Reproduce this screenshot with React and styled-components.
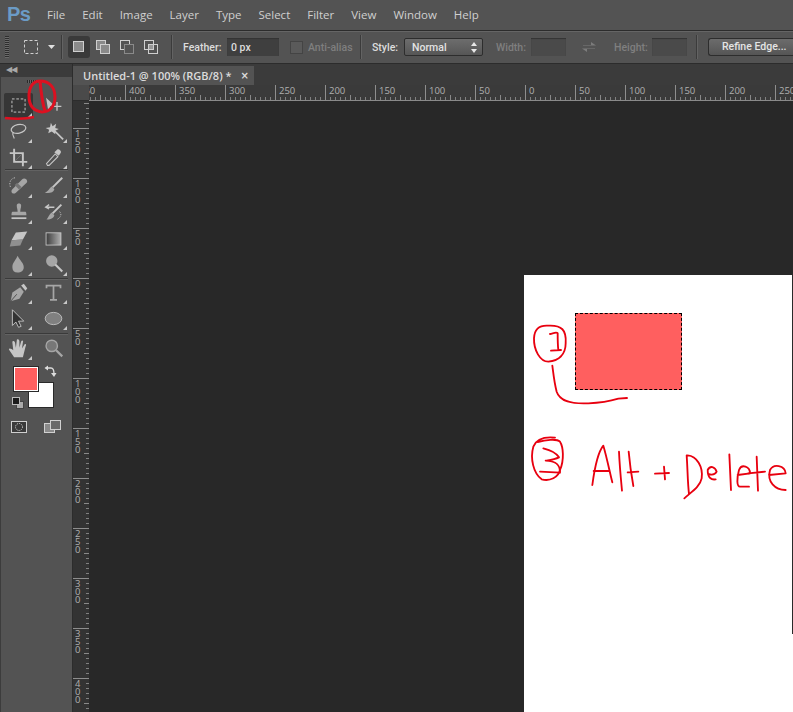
import styled, { createGlobalStyle } from "styled-components";

const GlobalStyle = createGlobalStyle`
  html, body {
    margin: 0;
    padding: 0;
    background: #fff;
  }
  * {
    box-sizing: border-box;
  }
`;

const Window = styled.div`
  width: 793px;
  height: 712px;
  overflow: hidden;
  display: flex;
  flex-direction: column;
  background: #535353;
  font-family: "Open Sans", "Liberation Sans", sans-serif;
  color: #d8d8d8;
`;

// 상단 메뉴
const MenuBar = styled.div`
  height: 31px;
  flex: none;
  display: flex;
  align-items: center;
  padding: 0 0 2px 7px;
  background: #535353;
  border-bottom: 1px solid #2c2c2c;
`;

const Logo = styled.span`
  width: 40px;
  font-family: "Liberation Sans", sans-serif;
  font-size: 20px;
  font-weight: 700;
  color: #6b9bc6;
  letter-spacing: -0.5px;
`;

const MenuItems = styled.div`
  display: flex;
  gap: 17px;
`;

const MenuItem = styled.span`
  font-size: 11.5px;
  color: #d0d0d0;
`;

// 옵션 바
const OptionsBar = styled.div`
  height: 33px;
  flex: none;
  display: flex;
  align-items: center;
  padding-bottom: 1px;
  background: #535353;
  border-bottom: 1px solid #2c2c2c;
  border-top: 1px solid #656565;
  font-family: Roboto, "Liberation Sans", sans-serif;
`;

const Grip = styled.div`
  width: 4px;
  height: 22px;
  flex: none;
  margin-left: 5px;
  background: repeating-linear-gradient(to bottom, #2e2e2e 0 1px, #6a6a6a 1px 2px);
`;

const MarqueeOption = styled.svg`
  flex: none;
  margin-left: 6px;
`;

const Separator = styled.div`
  width: 1px;
  height: 24px;
  flex: none;
  margin-left: ${(p) => p.$left}px;
  margin-right: ${(p) => p.$right}px;
  background: #3b3b3b;
  box-shadow: 1px 0 0 #636363;
`;

const ModeButton = styled.div`
  width: 22px;
  height: 22px;
  flex: none;
  margin-right: 2px;
  display: flex;
  align-items: center;
  justify-content: center;
  border-radius: 3px;
  background: ${(p) => (p.$active ? "#3a3a3a" : "transparent")};
`;

const OptionLabel = styled.span`
  flex: none;
  width: ${(p) => p.$width}px;
  font-size: 10.5px;
  font-weight: 500;
  margin-left: ${(p) => p.$left || 0}px;
  color: ${(p) => (p.$muted ? "#7f7f7f" : "#dcdcdc")};
  white-space: nowrap;
`;

const OptionInput = styled.div`
  width: ${(p) => p.$width}px;
  height: 18px;
  flex: none;
  margin-left: ${(p) => p.$left}px;
  padding-left: 4px;
  font-size: 10.5px;
  font-weight: 500;
  line-height: 19px;
  color: #dcdcdc;
  background: ${(p) => (p.$muted ? "#4a4a4a" : "#3f3f3f")};
  box-shadow: inset 0 1px 1px #333;
`;

const CheckBox = styled.div`
  width: 13px;
  height: 13px;
  flex: none;
  margin-left: 11px;
  background: #5a5a5a;
  border: 1px solid #444;
`;

const StyleSelect = styled.div`
  width: 79px;
  height: 18px;
  flex: none;
  margin-left: 8px;
  padding: 0 5px 0 7px;
  display: flex;
  align-items: center;
  justify-content: space-between;
  font-size: 10.5px;
  font-weight: 500;
  color: #e2e2e2;
  border: 1px solid #2d2d2d;
  border-radius: 2px;
  background: linear-gradient(#6d6d6d, #565656);
`;

const SwapIcon = styled.svg`
  flex: none;
  margin: 0 17px 0 15px;
`;

const RefineButton = styled.div`
  width: 85px;
  height: 18px;
  flex: none;
  padding-left: 13px;
  font-size: 10.5px;
  font-weight: 500;
  line-height: 16px;
  color: #e4e4e4;
  white-space: nowrap;
  border: 1px solid #2d2d2d;
  border-right: none;
  border-radius: 3px 0 0 3px;
  background: linear-gradient(#6c6c6c, #555);
`;

const Workspace = styled.div`
  flex: 1;
  min-height: 0;
  display: flex;
`;

// 왼쪽 도구 패널
const ToolPanel = styled.div`
  position: relative;
  width: 73px;
  flex: none;
  display: flex;
  flex-direction: column;
  background: #535353;
  border-left: 1px solid #3c3c3c;
  border-right: 1px solid #2c2c2c;
`;

const PanelHeader = styled.div`
  height: 13px;
  flex: none;
  padding-left: 6px;
  margin-left: -1px;
  font-family: "DejaVu Sans", sans-serif;
  font-size: 8px;
  line-height: 12px;
  letter-spacing: -1px;
  color: #a8a8a8;
  background: #3b3b3b;
`;

const PanelGrip = styled.div`
  width: 16px;
  height: 3px;
  flex: none;
  margin: 3px 0 0 26px;
  background: repeating-linear-gradient(to right, #2a2a2a 0 1px, #666 1px 2px);
`;

const ToolGrid = styled.div`
  display: grid;
  grid-template-columns: 35px 35px;
  grid-auto-rows: 26px;
  flex: none;
  margin-top: ${(p) => p.$top || 0}px;
`;

const ToolCell = styled.div`
  position: relative;
  width: 29px;
  height: 25px;
  margin-left: 3px;
  display: flex;
  align-items: center;
  justify-content: center;
  border-radius: 2px;
  background: ${(p) => (p.$active ? "#363636" : "transparent")};
  svg {
    filter: blur(0.25px);
  }
  ${(p) =>
    p.$more &&
    `
    &::after {
      content: "";
      position: absolute;
      right: 1px;
      bottom: 1px;
      border-left: 4px solid transparent;
      border-bottom: 4px solid #c8c8c8;
    }
  `}
`;

const ToolDivider = styled.div`
  height: 1px;
  flex: none;
  margin: ${(p) => p.$margin};
  background: #3a3a3a;
  box-shadow: 0 1px 0 #626262;
`;

const ColorWell = styled.div`
  position: relative;
  height: 46px;
  flex: none;
  margin-top: 4px;
`;

const Swatch = styled.div`
  position: absolute;
  left: ${(p) => p.$x}px;
  top: ${(p) => p.$y}px;
  width: 24px;
  height: 24px;
  background: ${(p) => p.$color};
  border: 1px solid #fff;
  outline: 1px solid #2a2a2a;
`;

const SwatchIcon = styled.div`
  position: absolute;
  left: ${(p) => p.$x}px;
  top: ${(p) => p.$y}px;
  line-height: 0;
`;

const ModeRow = styled.div`
  display: flex;
  align-items: center;
  flex: none;
  margin-top: 7px;
  padding-left: 9px;
  gap: 15px;
`;

const ToolMarks = styled.svg`
  position: absolute;
  left: -1px;
  top: 0;
  pointer-events: none;
`;

// 문서 영역
const DocumentArea = styled.div`
  flex: 1;
  min-width: 0;
  display: flex;
  flex-direction: column;
  background: #282828;
`;

const TabStrip = styled.div`
  height: 21px;
  flex: none;
  display: flex;
  align-items: flex-end;
  background: #3b3b3b;
`;

const Tab = styled.div`
  width: 181px;
  height: 19px;
  padding-left: 10px;
  display: flex;
  align-items: center;
  font-size: 11px;
  font-weight: 600;
  color: #dcdcdc;
  white-space: nowrap;
  background: #535353;
`;

const TabClose = styled.span`
  margin-left: 9px;
  font-family: "DejaVu Sans", sans-serif;
  font-size: 10px;
`;

const RulerRow = styled.div`
  height: 16px;
  flex: none;
  display: flex;
`;

const RulerCorner = styled.div`
  width: 16px;
  flex: none;
  background: #4a4a4a;
  border-bottom: 1px solid #2c2c2c;
`;

const HorizontalRuler = styled.div`
  flex: 1;
  min-width: 0;
  overflow: hidden;
  display: flex;
  background: #3a3a3a;
  border-bottom: 1px solid #8a8a8a;
`;

const HorizontalTick = styled.div`
  width: 50px;
  height: 15px;
  flex: none;
  margin-left: ${(p) => p.$offset || 0}px;
  padding-left: 3px;
  font-size: 9.5px;
  line-height: 11px;
  color: #b0b0b0;
  border-left: 1px solid #8e8e8e;
  background:
    repeating-linear-gradient(to right, transparent 0 24px, #8a8a8a 24px 25px) left bottom / 100% 5px no-repeat,
    repeating-linear-gradient(to right, transparent 0 4px, #808080 4px 5px) left bottom / 100% 3px no-repeat;
`;

const CanvasRow = styled.div`
  flex: 1;
  min-height: 0;
  display: flex;
`;

const VerticalRuler = styled.div`
  width: 16px;
  flex: none;
  overflow: hidden;
  display: flex;
  flex-direction: column;
  background: #333;
`;

const VerticalTick = styled.div`
  width: 16px;
  height: 50px;
  flex: none;
  margin-top: ${(p) => p.$offset || 0}px;
  padding: 1px 0 0 2px;
  border-top: 1px solid #8e8e8e;
  background:
    repeating-linear-gradient(to bottom, transparent 0 24px, #8a8a8a 24px 25px) right top / 5px 100% no-repeat,
    repeating-linear-gradient(to bottom, transparent 0 4px, #808080 4px 5px) right top / 3px 100% no-repeat;
`;

// 숫자를 한 글자씩 세로로 줄바꿈
const TickLabel = styled.div`
  width: 6px;
  font-size: 9.5px;
  line-height: 8px;
  color: #b0b0b0;
  word-break: break-all;
`;

const Canvas = styled.div`
  flex: 1;
  min-width: 0;
  padding: 174px 0 0 435px;
  background: #282828;
`;

const Page = styled.div`
  position: relative;
  width: 269px;
  height: 437px;
  background: #fff;
`;

const PageEdge = styled.div`
  position: absolute;
  right: 0;
  top: 0;
  width: 1px;
  height: 359px;
  background: #2a2a2a;
`;

const Selection = styled.div`
  position: absolute;
  left: 51px;
  top: 38px;
  width: 107px;
  height: 77px;
  background: #ff5f5f;
  border: 1px dashed #000;
`;

const Scribble = styled.svg`
  position: absolute;
  left: -9px;
  top: -5px;
  overflow: visible;
`;

const menus = ["File", "Edit", "Image", "Layer", "Type", "Select", "Filter", "View", "Window", "Help"];
const rulerX = [450, 400, 350, 300, 250, 200, 150, 100, 50, 0, 50, 100, 150, 200, 250];
const rulerY = ["", 150, 100, 50, 0, 50, 100, 150, 200, 250, 300, 350, 400];

const G = "#a6a6a6";
const L = "#c6c6c6";
const D = "#747474";

const toolIcons = {
  marquee: <rect x="4.5" y="4.5" width="15" height="15" stroke="#d6d6d6" strokeDasharray="3 2" />,
  move: (
    <>
      <path d="M3.5 3 L13 12 L8.5 12.5 L6 18 Z" fill="#c0c0c0" />
      <path d="M11 13 H21 M16 8 V18" stroke={L} strokeWidth="1.5" />
    </>
  ),
  lasso: (
    <>
      <ellipse cx="12" cy="9" rx="8.5" ry="5" stroke={L} strokeWidth="1.4" transform="rotate(-12 12 9)" />
      <path d="M6 13 C4 16 7 17 7 20" stroke={L} strokeWidth="1.3" />
    </>
  ),
  wand: (
    <>
      <path d="M12 10 L23 21" stroke={L} strokeWidth="2" />
      <path d="M9 2 L11 6 L15 3 L14 8 L18 9 L14 11 L14 15 L10 12 L6 14 L7 10 L3 8 L8 7 Z" fill={L} />
    </>
  ),
  crop: (
    <>
      <path d="M7 2 V17 H22 M2 7 H17 V22" stroke={L} strokeWidth="2.2" />
      <path d="M8 16 L16 8" stroke={D} />
    </>
  ),
  dropper: (
    <>
      <path d="M5 21 L4 19 L14 8 L17 11 L7 21 Z" stroke={L} strokeWidth="1.2" />
      <path d="M13 6 L16 3 C18 1 22 5 20 7 L18 10 Z" fill={L} />
    </>
  ),
  heal: (
    <>
      <path d="M8 19 L20 8 C23 5 18 1 15 4 L4 15 C1 18 5 22 8 19 Z" fill={G} transform="translate(1 0)" />
      <path d="M9 9 L14 14" stroke={D} strokeWidth="4" />
      <path d="M8 2 C2 3 1 9 3 13" stroke={L} strokeDasharray="1.5 1.5" />
    </>
  ),
  brush: (
    <>
      <path d="M22 2 L11 13" stroke={L} strokeWidth="2.2" />
      <path d="M10 12 L13 15 C12 19 7 20 2 19 C6 18 7 14 10 12 Z" fill={G} />
    </>
  ),
  stamp: (
    <>
      <path d="M10 4 C10 1 15 1 15 4 C15 7 14 8 14 11 H20 C21 11 21 14 21 15 H4 C4 14 4 11 5 11 H11 C11 8 10 7 10 4 Z" fill={G} />
      <path d="M4 18.5 H21" stroke={L} strokeWidth="2" />
    </>
  ),
  history: (
    <>
      <path d="M21 3 L11 13" stroke={L} strokeWidth="2.2" />
      <path d="M10 12 L13 15 C12 19 7 20 4 20 C6 18 7 14 10 12 Z" fill={G} />
      <path d="M13 6 L4 6 M7 3 L3 6 L7 8" stroke={L} strokeWidth="1.5" />
      <path d="M19 11 C22 14 20 18 16 20" stroke={L} strokeDasharray="1.5 1.5" />
    </>
  ),
  eraser: (
    <>
      <path d="M9 5 L22 4 L17 13 L4 14 Z" fill={L} />
      <path d="M4 14 L17 13 L14 20 L2 21 Z" fill="#8f8f8f" />
    </>
  ),
  gradient: (
    <>
      <defs>
        <linearGradient id="grad" x1="0" x2="1">
          <stop offset="0" stopColor="#3c3c3c" />
          <stop offset="1" stopColor="#b0b0b0" />
        </linearGradient>
      </defs>
      <rect x="3.5" y="5.5" width="17" height="14" fill="url(#grad)" stroke={L} />
    </>
  ),
  drop: <path d="M11 2 C13 7 18 10 18 15 C18 19 15 21 11 21 C7 21 5 19 5 15 C5 10 9 7 11 2 Z" fill={G} />,
  dodge: (
    <>
      <circle cx="10" cy="8" r="6.5" fill={G} />
      <path d="M14 12 L22 20" stroke={L} strokeWidth="2.4" />
    </>
  ),
  pen: (
    <>
      <path d="M3 22 L5 12 L14 6 L18 11 L13 19 Z" fill={G} />
      <path d="M3 22 L10 14" stroke="#444" />
      <path d="M15 4 L18 2 L22 7 L20 10 Z" fill={L} />
    </>
  ),
  type: <path d="M4 7 V4 H20 V7 M12 4 V20 M8 20.5 H16" stroke={G} strokeWidth="2" />,
  select: <path d="M5 2 V20 L9 16 L12 22 L15 21 L12 15 H18 Z" fill="#333" stroke="#ccc" />,
  ellipse: <ellipse cx="12" cy="12" rx="9.5" ry="7" fill="#808080" stroke={L} />,
  hand: (
    <path
      d="M7 22 L1 13 C1 11 4 12 6 14 L5 5 C5 3 7 3 8 5 L9 11 L10 3 C10 1 12 1 13 3 L13 11 L15 4 C16 2 18 3 17 5 L16 12 L19 7 C21 6 21 8 20 10 L17 22 Z"
      fill={L}
    />
  ),
  zoom: (
    <>
      <circle cx="10" cy="9" r="6.5" fill="#777" stroke={G} strokeWidth="1.6" />
      <path d="M15 14 L22 21" stroke={G} strokeWidth="2.6" />
    </>
  ),
};

function Tool({ name, active, more = true }) {
  return (
    <ToolCell $active={active} $more={more}>
      <svg width="21" height="21" viewBox="0 0 24 24" fill="none">
        {toolIcons[name]}
      </svg>
    </ToolCell>
  );
}

function ModeIcon({ kind }) {
  return (
    <svg width="16" height="16" viewBox="0 0 16 16" fill="none">
      {kind === "new" && <rect x="2.5" y="2.5" width="10" height="10" fill="#8a8a8a" stroke="#cfcfcf" />}
      {kind === "add" && (
        <>
          <rect x="1.5" y="1.5" width="9" height="9" fill="#8a8a8a" stroke="#cfcfcf" />
          <rect x="5.5" y="5.5" width="9" height="9" fill="#8a8a8a" stroke="#cfcfcf" />
        </>
      )}
      {kind === "sub" && (
        <>
          <rect x="1.5" y="1.5" width="9" height="9" stroke="#cfcfcf" />
          <rect x="5.5" y="5.5" width="9" height="9" fill="#535353" stroke="#8a8a8a" />
        </>
      )}
      {kind === "cross" && (
        <>
          <rect x="1.5" y="1.5" width="9" height="9" stroke="#cfcfcf" />
          <rect x="5.5" y="5.5" width="9" height="9" stroke="#cfcfcf" />
          <rect x="6" y="6" width="4" height="4" fill="#999" />
        </>
      )}
    </svg>
  );
}

function App() {
  return (
    <>
      <GlobalStyle />
      <Window>
        <MenuBar>
          <Logo>Ps</Logo>
          <MenuItems>
            {menus.map((m) => (
              <MenuItem key={m}>{m}</MenuItem>
            ))}
          </MenuItems>
        </MenuBar>

        <OptionsBar>
          <Grip />
          <MarqueeOption width="46" height="18" viewBox="0 0 46 18" fill="none">
            <rect x="9.5" y="2.5" width="13" height="13" stroke="#d0d0d0" strokeDasharray="3 2" />
            <path d="M33 7 H40 L36.5 11 Z" fill="#e0e0e0" />
          </MarqueeOption>
          <Separator $left={0} $right={6} />
          <ModeButton $active>
            <ModeIcon kind="new" />
          </ModeButton>
          <ModeButton>
            <ModeIcon kind="add" />
          </ModeButton>
          <ModeButton>
            <ModeIcon kind="sub" />
          </ModeButton>
          <ModeButton>
            <ModeIcon kind="cross" />
          </ModeButton>
          <Separator $left={7} $right={11} />
          <OptionLabel $width={36}>Feather:</OptionLabel>
          <OptionInput $width={52} $left={8}>
            0 px
          </OptionInput>
          <CheckBox />
          <OptionLabel $muted $left={5} $width={39}>
            Anti-alias
          </OptionLabel>
          <Separator $left={13} $right={11} />
          <OptionLabel $width={24}>Style:</OptionLabel>
          <StyleSelect>
            Normal
            <svg width="6" height="11" viewBox="0 0 6 11">
              <path d="M3 0 L6 4 H0 Z M3 11 L6 7 H0 Z" fill="#e8e8e8" />
            </svg>
          </StyleSelect>
          <OptionLabel $muted $left={13} $width={29}>
            Width:
          </OptionLabel>
          <OptionInput $muted $width={35} $left={6} />
          <SwapIcon width="16" height="14" viewBox="0 0 16 14">
            <path d="M2 5 H10 V2 L15 5.5 H2 Z M14 9 H6 V12 L1 8.5 H14 Z" fill="#7c7c7c" />
          </SwapIcon>
          <OptionLabel $muted $width={32}>
            Height:
          </OptionLabel>
          <OptionInput $muted $width={35} $left={6} />
          <Separator $left={9} $right={11} />
          <RefineButton>Refine Edge...</RefineButton>
        </OptionsBar>

        <Workspace>
          <ToolPanel>
            <PanelHeader>◀◀</PanelHeader>
            <PanelGrip />
            <ToolGrid $top={10}>
              <Tool name="marquee" active />
              <Tool name="move" more={false} />
              <Tool name="lasso" />
              <Tool name="wand" />
              <Tool name="crop" />
              <Tool name="dropper" />
            </ToolGrid>
            <ToolDivider $margin="-2px 4px 4px" />
            <ToolGrid>
              <Tool name="heal" />
              <Tool name="brush" />
              <Tool name="stamp" />
              <Tool name="history" />
              <Tool name="eraser" />
              <Tool name="gradient" />
              <Tool name="drop" />
              <Tool name="dodge" />
            </ToolGrid>
            <ToolDivider $margin="0 4px 1px" />
            <ToolGrid>
              <Tool name="pen" />
              <Tool name="type" />
              <Tool name="select" />
              <Tool name="ellipse" />
            </ToolGrid>
            <ToolDivider $margin="1px 4px 2px" />
            <ToolGrid>
              <Tool name="hand" />
              <Tool name="zoom" more={false} />
            </ToolGrid>
            <ColorWell>
              <Swatch $x={28} $y={17} $color="#fff" />
              <Swatch $x={13} $y={1} $color="#ff5f5f" />
              <SwatchIcon $x={42} $y={-1}>
                <svg width="14" height="14" viewBox="0 0 14 14" fill="none">
                  <path d="M3 3 H8 C10 3 11 5 11 9" stroke="#ddd" strokeWidth="1.3" />
                  <path d="M5 0.5 L1.5 3 L5 5.5 Z M8 8 H13.5 L11 12 Z" fill="#ddd" />
                </svg>
              </SwatchIcon>
              <SwatchIcon $x={11} $y={31}>
                <svg width="12" height="12" viewBox="0 0 12 12">
                  <rect x="4.5" y="4.5" width="7" height="7" fill="#aaa" stroke="#444" />
                  <rect x="0.5" y="0.5" width="7" height="7" fill="#1c1c1c" stroke="#bbb" />
                </svg>
              </SwatchIcon>
            </ColorWell>
            <ModeRow>
              <svg width="18" height="14" viewBox="0 0 18 14" fill="none">
                <rect x="1.5" y="1.5" width="15" height="11" fill="#3a3a3a" stroke="#cfcfcf" />
                <circle cx="9" cy="7" r="3.5" stroke="#ddd" strokeDasharray="1 1" />
              </svg>
              <svg width="19" height="16" viewBox="0 0 19 16" fill="none">
                <rect x="1.5" y="4.5" width="10" height="9" fill="#8a8a8a" stroke="#d0d0d0" />
                <rect x="7.5" y="1.5" width="10" height="9" fill="#6a6a6a" stroke="#d0d0d0" />
              </svg>
            </ModeRow>
            {/* 빨간 표시 */}
            <ToolMarks width="72" height="80" viewBox="0 0 72 80">
              <path
                d="M40 17 C33 17 29 23 29 32 C29 42 34 47 42 48 C50 48 55 42 55 33 C55 24 50 17 40 17 M40 17 C41 28 42 38 45 47"
                stroke="#dd1020"
                strokeWidth="3"
                fill="none"
              />
              <path d="M5 54 C14 55 26 55 34 53" stroke="#dd1020" strokeWidth="2.4" fill="none" />
            </ToolMarks>
          </ToolPanel>

          <DocumentArea>
            <TabStrip>
              <Tab>
                Untitled-1 @ 100% (RGB/8) *<TabClose>×</TabClose>
              </Tab>
            </TabStrip>
            <RulerRow>
              <RulerCorner />
              <HorizontalRuler>
                {rulerX.map((n, i) => (
                  <HorizontalTick key={i} $offset={i === 0 ? -14 : 0}>
                    {n}
                  </HorizontalTick>
                ))}
              </HorizontalRuler>
            </RulerRow>
            <CanvasRow>
              <VerticalRuler>
                {rulerY.map((n, i) => (
                  <VerticalTick key={i} $offset={i === 0 ? -23 : 0}>
                    <TickLabel>{n}</TickLabel>
                  </VerticalTick>
                ))}
              </VerticalRuler>
              <Canvas>
                <Page>
                  <PageEdge />
                  <Selection />
                  <Scribble width="278" height="240" viewBox="0 0 834 720" fill="none" stroke="#e8000f" strokeWidth="5.5" strokeLinecap="round" strokeLinejoin="round">
                    <path d="M100 167 C70 165 58 180 57 205 C56 240 75 275 100 275 C130 272 152 255 152 220 C155 180 140 165 100 167" />
                    <path d="M105 192 C115 190 125 185 128 190 C128 205 128 225 130 240 M108 242 L138 240" />
                    <path d="M112 287 C115 310 118 340 125 365 C135 395 170 402 220 400 C270 398 290 392 310 386 L336 384" />
                    <path d="M120 503 C90 500 65 505 55 530 C45 565 55 610 80 628 C105 635 130 622 135 600 C148 570 145 530 135 515 C125 505 90 510 68 516" />
                    <path d="M85 535 C105 540 125 550 132 562 C120 568 105 570 92 572 C110 572 135 578 135 606 M75 605 L135 608" />
                    <path d="M232 645 C238 600 250 545 265 527 C275 560 285 610 292 637 M236 603 L283 603" />
                    <path d="M312 545 C314 590 318 630 321 662" />
                    <path d="M341 545 C345 590 350 620 355 648 M338 607 L370 605" />
                    <path d="M420 611 L462 609 M447 590 L450 628" />
                    <path d="M515 556 C518 600 518 640 522 672 M518 556 C545 558 565 590 560 625 C555 650 530 665 508 685" />
                    <path d="M578 600 C578 625 590 630 602 628 M578 600 C585 585 600 590 605 605 C600 615 590 615 580 612" />
                    <path d="M643 553 L648 660" />
                    <path d="M668 615 L705 610 C705 590 680 580 672 600 C665 625 665 650 675 650 L702 650" />
                    <path d="M725 560 L729 662 M700 610 L750 605" />
                    <path d="M762 615 L812 610 C810 585 775 580 765 600 C755 635 780 660 812 660" />
                  </Scribble>
                </Page>
              </Canvas>
            </CanvasRow>
          </DocumentArea>
        </Workspace>
      </Window>
    </>
  );
}

export default App;
